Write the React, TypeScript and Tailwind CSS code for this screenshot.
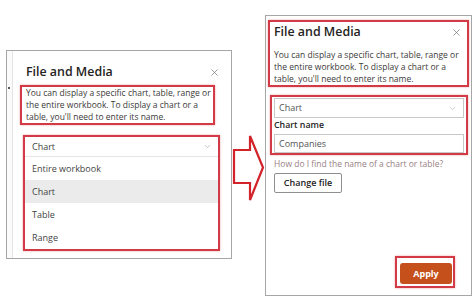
import { X, ChevronDown } from "lucide-react";

function RedBox({ className, children }: { className?: string; children: React.ReactNode }) {
  return (
    <div className={"border-2 border-[#d23a46] shadow-[0_0_2px_rgba(210,58,70,0.45)] " + (className ?? "")}>
      {children}
    </div>
  );
}

const options = ["Entire workbook", "Chart", "Table", "Range"];

function LeftPanel() {
  return (
    <div className="ml-[6px] mt-[50px] w-[226px] h-[209px] shrink-0 border border-[#a6a6a6] flex">
      {/* narrow strip on the left edge of the pane */}
      <div className="w-[6px] shrink-0 border-r border-[#e4e4e4] bg-[#fbfbfb] relative">
        <div className="absolute left-[1px] top-[36px] w-[2px] h-[2px] bg-[#555]" />
      </div>
      <div className="flex-1 flex flex-col pt-[11px]">
        <div className="flex items-center justify-between h-[20px] pl-[13px] pr-[11px]">
          <span className="text-[12.4px] font-semibold text-[#252423]">File and Media</span>
          <X size={11} strokeWidth={1.4} className="text-[#666]" />
        </div>
        <RedBox className="mt-[3px] ml-[7px] mr-[16px] pl-[4px] pr-0">
          <p className="text-[8.5px] leading-[12px] text-[#3b3a39] whitespace-nowrap">
            You can display a specific chart, table, range or
            <br />
            the entire workbook. To display a chart or a
            <br />
            table, you'll need to enter its name.
          </p>
        </RedBox>
        <RedBox className="mt-[10px] ml-[10px] mr-[11px] bg-white">
          <div className="h-[20px] flex items-center justify-between pl-[7px] pr-[6px] border-b border-[#e6e6e6] text-[9px] text-[#444]">
            <span>Chart</span>
            <ChevronDown size={9} strokeWidth={1.5} className="text-[#9a9a9a]" />
          </div>
          {options.map((o) => (
            <div
              key={o}
              className={
                "h-[23px] flex items-center pl-[7px] text-[9px] text-[#444] " +
                (o === "Chart" ? "bg-[#ebebeb]" : "")
              }
            >
              {o}
            </div>
          ))}
        </RedBox>
      </div>
    </div>
  );
}

function Arrow() {
  return (
    <div className="w-[33px] shrink-0 mt-[134px]">
      <svg width="33" height="68" viewBox="0 0 33 68">
        <polygon
          points="2,16 18,16 18,2 31,33.5 18,66 18,49 2,49"
          fill="white"
          stroke="#d2232a"
          strokeWidth="2.2"
          strokeLinejoin="miter"
        />
      </svg>
    </div>
  );
}

function RightPanel() {
  return (
    <div className="mt-[15px] w-[207px] h-[281px] shrink-0 border border-[#a6a6a6] flex flex-col">
      <RedBox className="mt-[4px] mx-[2px] pl-[4px] pr-[5px]">
        <div className="flex items-center justify-between h-[20px]">
          <span className="text-[12.4px] font-semibold text-[#252423]">File and Media</span>
          <X size={11} strokeWidth={1.4} className="text-[#666]" />
        </div>
        <p className="mt-[7px] text-[8.5px] leading-[12px] text-[#3b3a39] whitespace-nowrap">
          You can display a specific chart, table, range or
          <br />
          the entire workbook. To display a chart or a
          <br />
          table, you'll need to enter its name.
        </p>
      </RedBox>
      <RedBox className="mt-[8px] ml-[4px] mr-[3px] px-[2px] pt-[1px]">
        <div className="h-[20px] border border-[#c8c8c8] flex items-center justify-between pl-[4px] pr-[6px] text-[9px] text-[#555]">
          <span>Chart</span>
          <ChevronDown size={9} strokeWidth={1.5} className="text-[#a8a8a8]" />
        </div>
        <div className="h-[16px] flex items-center text-[8.8px] font-semibold text-[#252423]">Chart name</div>
        <div className="h-[19px] border border-[#c8c8c8] flex items-center pl-[4px] text-[9px] text-[#555]">
          Companies
        </div>
      </RedBox>
      <p className="mt-[2px] ml-[8px] text-[8.5px] leading-[14px] text-[#9a7f85]">
        How do I find the name of a chart or table?
      </p>
      <button className="mt-[2px] ml-[8px] w-[68px] h-[20px] border border-[#8f8f8f] rounded-[2px] bg-white text-[9px] font-semibold text-[#252423] flex items-center justify-center">
        Change file
      </button>
      <div className="flex-1" />
      <RedBox className="self-end mr-[16px] mb-[7px] pl-[3px] pr-[1px] pt-[5px] pb-[2px]">
        <button className="w-[52px] h-[21px] rounded-[3px] bg-[#c5501b] text-white text-[9px] font-bold flex items-center justify-center">
          Apply
        </button>
      </RedBox>
    </div>
  );
}

export default function App() {
  return (
    <div className="w-[474px] h-[303px] bg-white flex items-start overflow-hidden font-['Open_Sans','Noto_Sans',sans-serif]">
      <LeftPanel />
      <Arrow />
      <RightPanel />
    </div>
  );
}
